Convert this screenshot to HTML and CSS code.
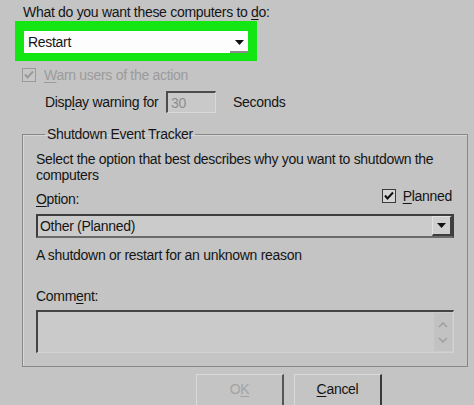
FILE: index.html
```html
<!DOCTYPE html>
<html>
<head>
<meta charset="utf-8">
<link rel="stylesheet" href="styles.css">
</head>
<body>
<div class="dialog">
  <div class="title">What do you want these computers to <u>d</u>o:</div>
  <div class="highlight">
    <div class="combo combo-white">
      <span class="combo-text">Restart</span>
      <span class="combo-btn flat"><svg width="9" height="5" viewBox="0 0 9 5"><path d="M0 0H9L4.5 5Z" fill="#111"/></svg></span>
    </div>
  </div>
  <div class="row warn">
    <span class="check check-disabled"><svg width="12" height="12" viewBox="0 0 12 12"><path d="M2 5.5L4.5 8.5L10 2.5" fill="none" stroke="#9a9a9a" stroke-width="2"/></svg></span>
    <span class="muted"><u>W</u>arn users of the action</span>
  </div>
  <div class="row display">
    <span class="display-label">Disp<u>l</u>ay warning for</span>
    <span class="spin">30</span>
    <span class="seconds">Seconds</span>
  </div>
  <fieldset class="group">
    <legend>Shutdown Event Tracker</legend>
    <p class="desc">Select the option that best describes why you want to shutdown the computers</p>
    <div class="option-row">
      <span><u>O</u>ption:</span>
      <span class="planned">
        <span class="check"><svg width="12" height="12" viewBox="0 0 12 12"><path d="M2 5.5L4.5 8.5L10 2.5" fill="none" stroke="#111" stroke-width="2"/></svg></span>
        <span><u>P</u>lanned</span>
      </span>
    </div>
    <div class="combo combo-gray">
      <span class="combo-text">Other (Planned)</span>
      <span class="combo-btn raised"><svg width="9" height="5" viewBox="0 0 9 5"><path d="M0 0H9L4.5 5Z" fill="#111"/></svg></span>
    </div>
    <p class="reason">A shutdown or restart for an unknown reason</p>
    <p class="comment-label">Comm<u>e</u>nt:</p>
    <div class="comment">
      <div class="comment-area"></div>
      <div class="scroll">
        <svg width="10" height="6" viewBox="0 0 10 6"><path d="M1 5L5 1L9 5" fill="none" stroke="#9c9c9c" stroke-width="1.4"/></svg>
        <svg width="10" height="6" viewBox="0 0 10 6"><path d="M1 1L5 5L9 1" fill="none" stroke="#9c9c9c" stroke-width="1.4"/></svg>
      </div>
    </div>
  </fieldset>
  <div class="buttons">
    <button class="btn btn-disabled">O<u>K</u></button>
    <button class="btn"><u>C</u>ancel</button>
  </div>
</div>
</body>
</html>
```
FILE: styles.css
```css
html, body {
  margin: 0;
  padding: 0;
  background: #c4c4c4;
  overflow: hidden;
}
body {
  font-family: "Liberation Sans", Arial, sans-serif;
  font-size: 14px;
  line-height: 16px;
  letter-spacing: -0.3px;
  color: #151515;
}
u { text-decoration-thickness: 1px; text-underline-offset: 2px; }
.dialog {
  width: 474px;
  height: 405px;
  box-sizing: border-box;
  padding: 4px 6px 0 22px;
}
.title {
  height: 17px;
  padding-left: 1px;
}
.highlight {
  margin-left: -7px;
  width: 242px;
  height: 40px;
  box-sizing: border-box;
  background: #14e614;
  padding: 10px 9px 8px 9px;
}
.combo {
  display: flex;
  align-items: center;
  box-sizing: border-box;
}
.combo-white {
  height: 22px;
  background: #fdfdfd;
}
.combo-text {
  flex: 1;
  padding-left: 4px;
}
.combo-btn {
  display: flex;
  align-items: center;
  justify-content: center;
  box-sizing: border-box;
}
.combo-btn.flat {
  width: 18px;
  height: 22px;
  border-bottom: 2px solid #8a8a8a;
  padding-top: 2px;
}
.row {
  display: flex;
  align-items: center;
}
.warn {
  margin-top: 5px;
  height: 18px;
}
.check {
  width: 14px;
  height: 14px;
  box-sizing: border-box;
  border: 1px solid #3a3a3a;
  background: #d4d4d4;
  display: flex;
  align-items: center;
  justify-content: center;
}
.check-disabled {
  border-color: #9a9a9a;
  background: #c6c6c6;
}
.muted {
  color: #9b9b9b;
  margin-left: 8px;
}
.display {
  margin-top: 7px;
  height: 22px;
  padding-left: 23px;
}
.display-label {
  width: 121px;
}
.spin {
  width: 50px;
  height: 22px;
  box-sizing: border-box;
  border-top: 2px solid #4c4c4c;
  border-left: 2px solid #4c4c4c;
  border-right: 1px solid #d8d8d8;
  border-bottom: 1px solid #d8d8d8;
  color: #8e8e8e;
  padding: 2px 0 0 3px;
  background: #c9c9c9;
}
.seconds {
  margin-left: 17px;
}
.group {
  margin: 13px 0 0 0;
  padding: 9px 13px 13px 13px;
  border: 1px solid #878787;
  box-shadow: inset 1px 1px 0 #d6d6d6;
  min-width: 0;
}
.group legend {
  padding: 0 2px;
  margin-left: 9px;
  line-height: 16px;
}
.desc {
  margin: 0;
  line-height: 16px;
}
.option-row {
  margin-top: 8px;
  height: 16px;
  display: flex;
  align-items: center;
  justify-content: space-between;
}
.planned {
  display: flex;
  align-items: center;
  gap: 7px;
  margin-right: 2px;
  margin-top: -6px;
}
.combo-gray {
  margin-top: 7px;
  height: 24px;
  background: #cbcbcb;
  border: 2px solid #3e3e3e;
  border-bottom-color: #6a6a6a;
}
.combo-btn.raised {
  width: 20px;
  height: 20px;
  background: #cfcfcf;
  border-left: 1px solid #e2e2e2;
  border-top: 1px solid #e2e2e2;
  border-right: 2px solid #3e3e3e;
  border-bottom: 2px solid #3e3e3e;
}
.combo-gray .combo-text { padding-left: 2px; }
.reason {
  margin: 9px 0 0 0;
}
.comment-label {
  margin: 25px 0 0 0;
}
.comment {
  margin-top: 6px;
  height: 43px;
  display: flex;
  box-sizing: border-box;
  border-top: 2px solid #444;
  border-left: 2px solid #444;
  border-right: 1px solid #d2d2d2;
  border-bottom: 1px solid #d2d2d2;
  background: #cacaca;
}
.comment-area { flex: 1; }
.scroll {
  width: 18px;
  margin: 1px 1px 1px 0;
  background: #c2c2c2;
  display: flex;
  flex-direction: column;
  align-items: center;
  justify-content: space-around;
  padding: 4px 0;
}
.buttons {
  display: flex;
  gap: 10px;
  margin-top: 7px;
  padding-left: 174px;
}
.btn {
  width: 88px;
  height: 34px;
  box-sizing: border-box;
  background: #c4c4c4;
  border: none;
  border-top: 1px solid #dadada;
  border-left: 1px solid #dadada;
  border-right: 2px solid #3a3a3a;
  border-bottom: 2px solid #3a3a3a;
  font-family: "Liberation Sans", Arial, sans-serif;
  font-size: 14px;
  letter-spacing: -0.3px;
  color: #151515;
  padding: 0 0 4px 0;
}
.btn-disabled {
  color: #a3a3a3;
  border-right-color: #555;
  border-bottom-color: #555;
}
```
